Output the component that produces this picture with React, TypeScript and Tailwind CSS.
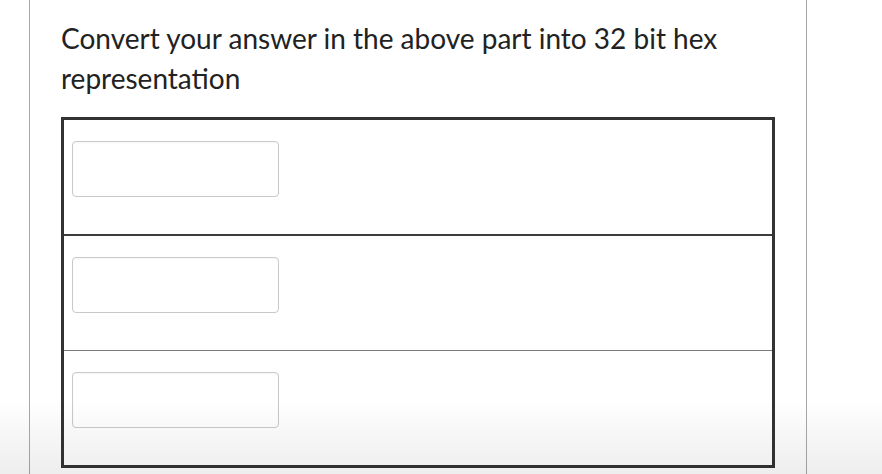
import React from 'react';

const rows = [0, 1, 2];

export default function App() {
  return (
    <div className="relative h-[474px] w-[882px] overflow-hidden bg-white" style={{ fontFamily: 'Lato, "Open Sans", sans-serif' }}>
      <div className="ml-[29px] h-full w-[778px] border-x border-[#a8a8a8] px-[31px] pt-[18px]">
        <p className="text-[28px] leading-[40px] text-[#222]">
          Convert your answer in the above part into 32 bit hex representation
        </p>

        {/* Answer table */}
        <div className="mt-[19px] border-[3px] border-[#333]">
          {rows.map((r) => (
            <div
              key={r}
              className={`px-[8px] pt-[21px] ${r === 0 ? 'border-b-2 border-[#3c3c3c] pb-[37px]' : ''} ${r === 1 ? 'border-b border-[#7a7a7a] pb-[37px]' : ''} ${r === 2 ? 'pb-[37px]' : ''}`}
            >
              <input
                type="text"
                className="block h-[56px] w-[207px] rounded-[4px] border border-[#c9c9c9] bg-white shadow-[inset_0_1px_2px_rgba(0,0,0,0.04)] outline-none"
              />
            </div>
          ))}
        </div>
      </div>

      {/* bottom fade */}
      <div className="pointer-events-none absolute inset-x-0 bottom-0 h-[75px] bg-gradient-to-b from-transparent to-black/[0.07]" />
    </div>
  );
}
